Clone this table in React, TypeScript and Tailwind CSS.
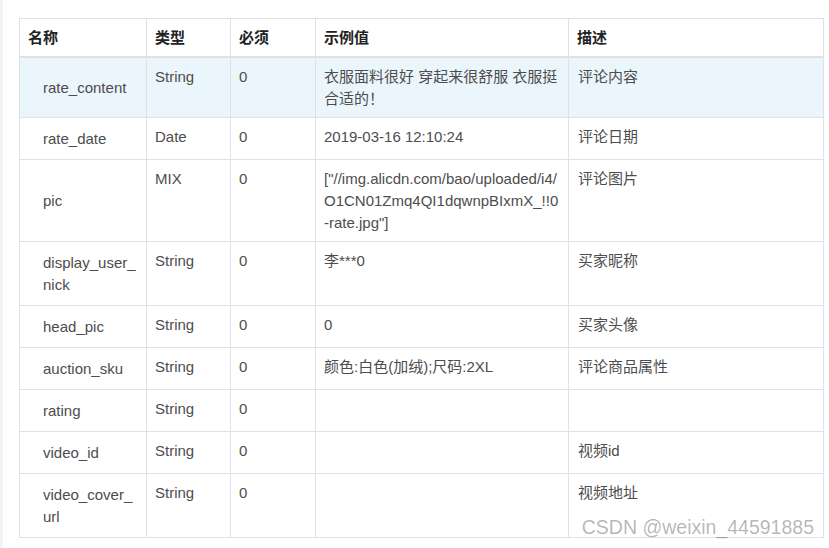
import React from 'react'

type Row = {
  name: React.ReactNode
  type: string
  required: string
  example: React.ReactNode
  desc: string
  active?: boolean
}

const rows: Row[] = [
  {
    name: 'rate_content',
    type: 'String',
    required: '0',
    example: (
      <>
        衣服面料很好 穿起来很舒服 衣服挺
        <br />
        合适的！
      </>
    ),
    desc: '评论内容',
    active: true,
  },
  { name: 'rate_date', type: 'Date', required: '0', example: '2019-03-16 12:10:24', desc: '评论日期' },
  {
    name: 'pic',
    type: 'MIX',
    required: '0',
    example: (
      <>
        ["//img.alicdn.com/bao/uploaded/i4/
        <br />
        O1CN01Zmq4QI1dqwnpBIxmX_!!0
        <br />
        -rate.jpg"]
      </>
    ),
    desc: '评论图片',
  },
  {
    name: (
      <>
        display_user_
        <br />
        nick
      </>
    ),
    type: 'String',
    required: '0',
    example: '李***0',
    desc: '买家昵称',
  },
  { name: 'head_pic', type: 'String', required: '0', example: '0', desc: '买家头像' },
  { name: 'auction_sku', type: 'String', required: '0', example: '颜色:白色(加绒);尺码:2XL', desc: '评论商品属性' },
  { name: 'rating', type: 'String', required: '0', example: '', desc: '' },
  { name: 'video_id', type: 'String', required: '0', example: '', desc: '视频id' },
  {
    name: (
      <>
        video_cover_
        <br />
        url
      </>
    ),
    type: 'String',
    required: '0',
    example: '',
    desc: '视频地址',
  },
]

const cell = 'border border-[#dfe2e5] px-[8px] pt-[8px] pb-[7px] align-top leading-[22px] whitespace-nowrap'
const th = 'border border-[#dfe2e5] px-[8px] pt-[8px] pb-[7px] text-left font-bold leading-[22px] text-[#222]'

export default function App() {
  return (
    <div
      className="relative flex h-[548px] w-[829px] overflow-hidden bg-white text-[15px] text-[#4d4d4d]"
      style={{ fontFamily: '"Liberation Sans", "Noto Sans CJK SC", sans-serif' }}
    >
      <div className="w-[3px] shrink-0 bg-[#f2f3f5]" />
      <div className="pl-[16px] pt-[18px]">
        <table className="w-[804px] table-fixed border-collapse">
          <colgroup>
            <col className="w-[127px]" />
            <col className="w-[84px]" />
            <col className="w-[85px]" />
            <col className="w-[253px]" />
            <col className="w-[255px]" />
          </colgroup>
          <thead>
            <tr className="border-b-2 border-[#dfe2e5]">
              <th className={th}>名称</th>
              <th className={th}>类型</th>
              <th className={th}>必须</th>
              <th className={th}>示例值</th>
              <th className={th}>描述</th>
            </tr>
          </thead>
          <tbody>
            {rows.map((r, i) => (
              <tr key={i} className={r.active ? 'bg-[#ebf5fc]' : 'bg-white'}>
                <td className="border border-[#dfe2e5] pl-[23px] pr-[8px] pt-[10px] pb-[9px] align-middle leading-[22px] whitespace-nowrap">
                  {r.name}
                </td>
                <td className={cell}>{r.type}</td>
                <td className={cell}>{r.required}</td>
                <td className={cell}>{r.example}</td>
                <td className={cell + ' pl-[9px]'}>{r.desc}</td>
              </tr>
            ))}
          </tbody>
        </table>
      </div>
      <div className="pointer-events-none absolute bottom-[11px] right-[15px] text-[19.5px] leading-none text-black/30">
        CSDN @weixin_44591885
      </div>
    </div>
  )
}
